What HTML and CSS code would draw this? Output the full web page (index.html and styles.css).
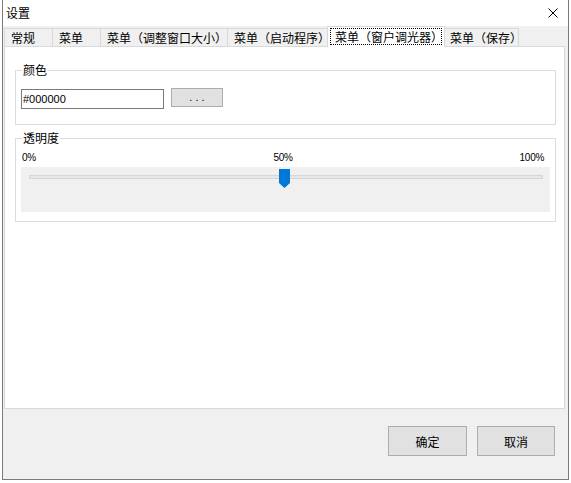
FILE: index.html
```html
<!DOCTYPE html>
<html lang="zh-CN">
<head>
<meta charset="utf-8">
<title>设置</title>
<link rel="stylesheet" href="styles.css">
</head>
<body>
<div class="window">
  <div class="titlebar">
    <span class="title">设置</span>
    <svg class="close" width="10" height="10" viewBox="0 0 10 10"><path d="M0.5 0.5 L9.5 9.5 M9.5 0.5 L0.5 9.5" stroke="#000" stroke-width="1" fill="none"/></svg>
  </div>
  <div class="client">
    <div class="tabs">
      <div class="tab tab-general">常规</div>
      <div class="tab tab-menu">菜单</div>
      <div class="tab tab-resize">菜单（调整窗口大小）</div>
      <div class="tab tab-launch">菜单（启动程序）</div>
      <div class="tab tab-dimmer active"><span class="focus">菜单（窗户调光器）</span></div>
      <div class="tab tab-save">菜单（保存）</div>
    </div>
    <div class="page">
      <div class="group group-color">
        <div class="caption">颜色</div>
        <div class="color-row">
          <div class="color-input">#000000</div>
          <button class="dots">. . .</button>
        </div>
      </div>
      <div class="group group-opacity">
        <div class="caption">透明度</div>
        <div class="scale"><span>0%</span><span>50%</span><span class="end">100%</span></div>
        <div class="slider">
          <div class="track"></div>
          <svg class="thumb" width="11" height="19" viewBox="0 0 11 19"><path d="M0 0 H11 V14 L5.5 19 L0 14 Z" fill="#0078d7"/></svg>
        </div>
      </div>
    </div>
    <div class="actions">
      <button class="btn btn-ok">确定</button>
      <button class="btn">取消</button>
    </div>
  </div>
</div>
</body>
</html>
```
FILE: styles.css
```css
* { box-sizing: border-box; }
html, body { margin: 0; }
body {
  background: #fff;
  font-family: "Noto Sans CJK SC", sans-serif;
  font-size: 12px;
  color: #000;
  width: 571px;
  height: 483px;
  overflow: hidden;
}
.window {
  margin-left: 2px;
  width: 567px;
  height: 480px;
  border: 1px solid #7a7a7a;
  border-top: 0;
  display: flex;
  flex-direction: column;
  background: #f0f0f0;
}
.titlebar {
  flex: none;
  height: 26px;
  background: #fff;
  display: flex;
  align-items: center;
  justify-content: space-between;
  padding: 0 10px 0 3px;
}
.title { line-height: 16px; }
.close { display: block; }
.client { flex: 1; display: flex; flex-direction: column; }
.tabs {
  flex: none;
  display: flex;
  align-items: flex-start;
  height: 20px;
  margin-left: 1px;
}
.tab {
  margin-top: 2px;
  height: 18px;
  border: 1px solid #d9d9d9;
  border-bottom: 0;
  border-right: 0;
  padding-left: 6px;
  line-height: 17px;
  white-space: nowrap;
  background: #f0f0f0;
}
.tab-general { width: 48px; }
.tab-menu { width: 48px; }
.tab-resize { width: 127px; }
.tab-launch { width: 102px; }
.tab-save { width: 76px; border-right: 1px solid #d9d9d9; }
.tab.active {
  width: 118px;
  margin: 0 -2px -1px;
  height: 21px;
  border-right: 1px solid #d9d9d9;
  background: #fff;
  position: relative;
  z-index: 1;
  padding: 1px 2px 0;
}
.focus {
  display: block;
  border: 1px dotted #000;
  line-height: 15px;
  padding-left: 4px;
}
.page {
  flex: none;
  margin-left: 1px;
  width: 561px;
  height: 363px;
  background: #fff;
  border: 1px solid #d9d9d9;
  padding: 23px 0 0 10px;
}
.group {
  width: 541px;
  border: 1px solid #dcdcdc;
}
.group-color { padding-bottom: 15px; }
.group-opacity { margin-top: 13px; padding-bottom: 9px; }
.caption {
  width: fit-content;
  margin: -9px 0 0 6px;
  padding: 0 1px;
  background: #fff;
  line-height: 16px;
}
.color-row {
  display: flex;
  align-items: flex-start;
  margin: 10px 0 0 5px;
}
.color-input {
  width: 143px;
  height: 20px;
  margin-top: 1px;
  border: 1px solid #7a7a7a;
  font: 11px "Liberation Sans", sans-serif;
  line-height: 18px;
  padding-left: 1px;
  background: #fff;
}
.dots {
  width: 52px;
  height: 19px;
  margin-left: 7px;
  border: 1px solid #adadad;
  background: #e1e1e1;
  font: 11px "Liberation Sans", sans-serif;
  line-height: 17px;
  text-align: center;
  padding: 0;
  color: #000;
}
.scale {
  display: grid;
  grid-template-columns: 1fr auto 1fr;
  margin: 6px 0 0 6px;
  width: 522px;
  font: 10px "Liberation Sans", sans-serif;
  line-height: 12px;
  letter-spacing: -0.3px;
}
.scale .end { text-align: right; }
.slider {
  position: relative;
  margin: 3px 0 0 5px;
  width: 529px;
  height: 45px;
  background: #f0f0f0;
  padding: 8px 0 0 8px;
}
.track {
  width: 514px;
  height: 4px;
  border: 1px solid #d6d6d6;
  background: #e7e7e7;
}
.thumb {
  position: absolute;
  left: 258px;
  top: 2px;
  display: block;
}
.actions {
  display: flex;
  justify-content: flex-end;
  gap: 10px;
  margin-top: 17px;
  padding-right: 13px;
}
.btn {
  width: 78px;
  height: 30px;
  border: 1px solid #adadad;
  background: #e1e1e1;
  font: 12px "Noto Sans CJK SC", sans-serif;
  color: #000;
  padding: 0;
}
.btn-ok { width: 79px; }
```
